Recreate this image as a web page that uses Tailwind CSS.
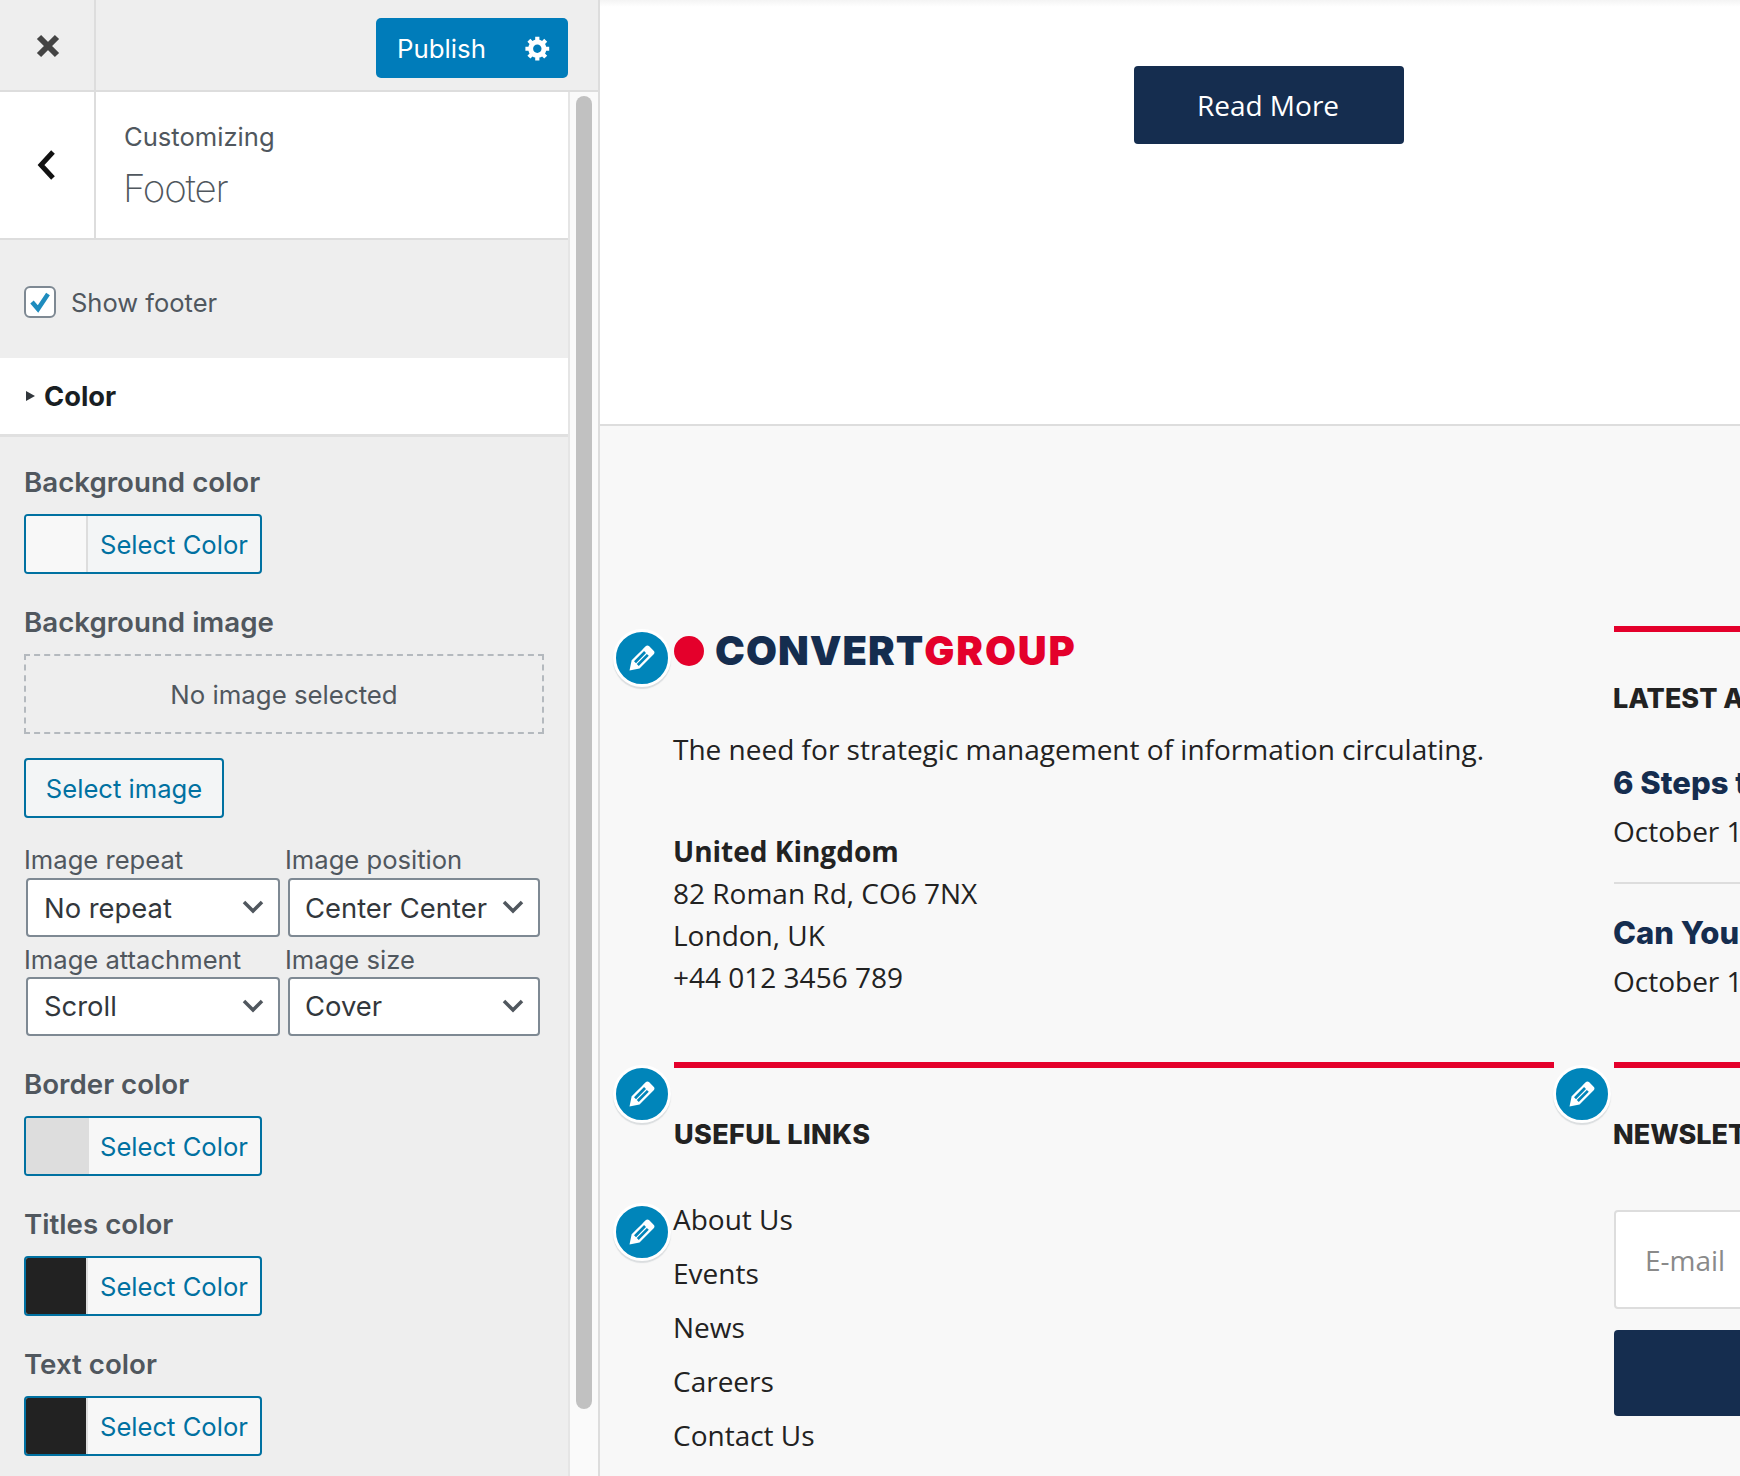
<!doctype html>
<html>
<head>
<meta charset="utf-8">
<script src="https://cdn.jsdelivr.net/npm/@tailwindcss/browser@4"></script>
</head>
<body class="m-0 w-[1740px] h-[1476px] overflow-hidden bg-white">
<div class="flex w-[1740px] h-[1476px] overflow-hidden">
  <aside class="w-[600px] h-[1476px] shrink-0 flex flex-col bg-[#eeeeee] border-r-2 border-[#dddddd] font-['Inter',sans-serif]">
    <header class="h-[92px] shrink-0 flex border-b-2 border-[#dddddd]">
      <div class="w-[96px] border-r-2 border-[#dddddd] flex items-center pl-[34px] pt-[1px]">
        <svg width="28" height="28" viewBox="0 0 28 28"><path d="M5 5 L23 23 M23 5 L5 23" stroke="#444444" stroke-width="6"/></svg>
      </div>
      <div class="ml-[280px] mt-[18px] w-[192px] h-[60px] rounded-[5px] bg-[#007cba] flex items-center text-white text-[25.8px] pl-[21px]">
        <span class="pt-[2px]">Publish</span>
        <svg class="ml-[38px]" width="28" height="28" viewBox="0 0 20 20" fill="#ffffff"><path d="M18 12h-2.18c-.17.7-.44 1.35-.81 1.93l1.54 1.54-2.1 2.1-1.54-1.54c-.58.36-1.23.63-1.91.79V19H8v-2.18c-.68-.16-1.33-.43-1.91-.79l-1.54 1.54-2.12-2.12 1.54-1.54c-.36-.58-.63-1.23-.79-1.91H1V9.03h2.17c.16-.7.44-1.35.8-1.94L2.43 5.55l2.1-2.1 1.54 1.54c.58-.37 1.24-.64 1.93-.81V2h3v2.18c.68.16 1.33.43 1.91.79l1.54-1.54 2.12 2.12-1.54 1.54c.36.59.64 1.24.8 1.94H18V12zm-8.5 1.5c1.66 0 3-1.34 3-3s-1.34-3-3-3-3 1.34-3 3 1.34 3 3 3z"/></svg>
      </div>
    </header>
    <div class="flex flex-1 min-h-0">
      <div class="w-[568px] shrink-0">
        <div class="h-[148px] flex bg-white border-b-2 border-[#dddddd]">
          <div class="w-[96px] border-r-2 border-[#dddddd] flex items-center justify-center">
            <svg width="22" height="32" viewBox="0 0 22 32"><path d="M17 3 L5 16 L17 29" fill="none" stroke="#111111" stroke-width="5"/></svg>
          </div>
          <div class="pl-[28px] pt-[27px]">
            <div class="text-[25.6px] leading-[36px] text-[#50575e]">Customizing</div>
            <div class="text-[38.5px] leading-[50px] font-extralight text-[#50575e] mt-[8px] -ml-[1px] tracking-[-1.2px]">Footer</div>
          </div>
        </div>
        <div class="h-[118px] flex items-center pl-[24px] pt-[6px] text-[25.5px] text-[#50575e]">
          <div class="w-[32px] h-[32px] rounded-[6px] border-2 border-[#7e8993] bg-white flex items-center justify-center">
            <svg width="24" height="24" viewBox="0 0 24 24"><path d="M4 12 L10 19 L20 4" fill="none" stroke="#1e8cbe" stroke-width="4.5"/></svg>
          </div>
          <span class="ml-[15px] pt-[2px]">Show footer</span>
        </div>
        <div class="h-[79px] bg-white border-b-[3px] border-[#e0e0e0] flex items-center pl-[26px] text-[#191e23]">
          <svg width="9" height="12" viewBox="0 0 9 12"><path d="M0 1 L9 6 L0 11 Z" fill="#32373c"/></svg>
          <span class="ml-[9px] pt-[2px] text-[27.3px] font-bold">Color</span>
        </div>
        <div class="px-[24px]">
          <div class="mt-[29px] text-[27.7px] leading-[32px] font-semibold text-[#50575e]">Background color</div>
          <div class="mt-[16px] w-[238px] h-[60px] rounded-[4px] border-2 border-[#0071a1] bg-[#f3f5f6] flex overflow-hidden">
            <div class="w-[62px] shrink-0 bg-[#f8f8f8] border-r-2 border-[#dddddd]"></div>
            <span class="pl-[12px] text-[25.6px] leading-[58px] text-[#0071a1]">Select Color</span>
          </div>
          <div class="mt-[32px] text-[27.7px] leading-[32px] font-semibold text-[#50575e]">Background image</div>
          <div class="mt-[16px] w-[520px] h-[80px] border-2 border-dashed border-[#b4b9be] flex items-center justify-center pt-[2px] text-[25.8px] text-[#50575e]">No image selected</div>
          <div class="mt-[24px] w-[200px] h-[60px] rounded-[4px] border-2 border-[#0071a1] bg-[#f3f5f6] text-center text-[25.6px] leading-[58px] text-[#0071a1]">Select image</div>
          <div class="mt-[26px] grid grid-cols-[261px_1fr] text-[25.6px] text-[#50575e]">
            <div class="leading-[32px]">Image repeat</div>
            <div class="leading-[32px]">Image position</div>
            <div class="relative ml-[2px] mt-[2px] w-[254px] h-[59px]">
              <select class="w-full h-full appearance-none bg-white border-2 border-[#7e8993] rounded-[4px] pl-[16px] pt-[2px] text-[27.4px] text-[#32373c]"><option>No repeat</option></select>
              <svg class="absolute right-[15px] top-[21px]" width="24" height="16" viewBox="0 0 24 16"><path d="M3 3 L12 12 L21 3" fill="none" stroke="#50575e" stroke-width="3.5"/></svg>
            </div>
            <div class="relative ml-[3px] mt-[2px] w-[252px] h-[59px]">
              <select class="w-full h-full appearance-none bg-white border-2 border-[#7e8993] rounded-[4px] pl-[15px] pt-[2px] text-[27.4px] text-[#32373c]"><option>Center Center</option></select>
              <svg class="absolute right-[15px] top-[21px]" width="24" height="16" viewBox="0 0 24 16"><path d="M3 3 L12 12 L21 3" fill="none" stroke="#50575e" stroke-width="3.5"/></svg>
            </div>
            <div class="mt-[7px] leading-[32px]">Image attachment</div>
            <div class="mt-[7px] leading-[32px]">Image size</div>
            <div class="relative ml-[2px] mt-[1px] w-[254px] h-[59px]">
              <select class="w-full h-full appearance-none bg-white border-2 border-[#7e8993] rounded-[4px] pl-[16px] text-[27.4px] text-[#32373c]"><option>Scroll</option></select>
              <svg class="absolute right-[15px] top-[21px]" width="24" height="16" viewBox="0 0 24 16"><path d="M3 3 L12 12 L21 3" fill="none" stroke="#50575e" stroke-width="3.5"/></svg>
            </div>
            <div class="relative ml-[3px] mt-[1px] w-[252px] h-[59px]">
              <select class="w-full h-full appearance-none bg-white border-2 border-[#7e8993] rounded-[4px] pl-[15px] text-[27.4px] text-[#32373c]"><option>Cover</option></select>
              <svg class="absolute right-[15px] top-[21px]" width="24" height="16" viewBox="0 0 24 16"><path d="M3 3 L12 12 L21 3" fill="none" stroke="#50575e" stroke-width="3.5"/></svg>
            </div>
          </div>
          <div class="mt-[32px] text-[27.7px] leading-[32px] font-semibold text-[#50575e]">Border color</div>
          <div class="mt-[16px] w-[238px] h-[60px] rounded-[4px] border-2 border-[#0071a1] bg-[#f7f7f7] flex overflow-hidden">
            <div class="w-[63px] shrink-0 bg-[#dddddd]"></div>
            <span class="pl-[11px] text-[25.6px] leading-[58px] text-[#0071a1]">Select Color</span>
          </div>
          <div class="mt-[32px] text-[27.7px] leading-[32px] font-semibold text-[#50575e]">Titles color</div>
          <div class="mt-[16px] w-[238px] h-[60px] rounded-[4px] border-2 border-[#0071a1] bg-[#f7f7f7] flex overflow-hidden">
            <div class="w-[62px] shrink-0 bg-[#222222] border-r-2 border-[#dddddd]"></div>
            <span class="pl-[12px] text-[25.6px] leading-[58px] text-[#0071a1]">Select Color</span>
          </div>
          <div class="mt-[32px] text-[27.7px] leading-[32px] font-semibold text-[#50575e]">Text color</div>
          <div class="mt-[16px] w-[238px] h-[60px] rounded-[4px] border-2 border-[#0071a1] bg-[#f7f7f7] flex overflow-hidden">
            <div class="w-[62px] shrink-0 bg-[#222222] border-r-2 border-[#dddddd]"></div>
            <span class="pl-[12px] text-[25.6px] leading-[58px] text-[#0071a1]">Select Color</span>
          </div>
        </div>
      </div>
      <div class="w-[30px] shrink-0 bg-[#fafafa] border-l-2 border-[#e5e5e5] pl-[6px] pt-[4px]">
        <div class="w-[16px] h-[1313px] rounded-full bg-[#c1c1c1]"></div>
      </div>
    </div>
  </aside>

  <main class="w-[1140px] h-[1476px] overflow-hidden font-['Open_Sans',sans-serif] text-[#222222]">
    <div class="w-[1338px]">
      <div class="h-[424px] bg-[linear-gradient(#f4f4f4,#ffffff_7px)] pt-[66px] flex justify-center items-start">
        <div class="w-[270px] h-[78px] rounded-[4px] bg-[#152d4f] text-white text-[28px] flex items-center justify-center pr-[2px]">Read More</div>
      </div>
      <div class="relative h-[1052px] bg-[#f8f8f8] border-t-2 border-[#dddddd]">
        <div class="grid grid-cols-[880px_1fr] gap-x-[60px] pl-[74px] pt-[200px]">
          <div>
            <div class="flex items-center h-[42px] mt-[4px]">
              <div class="w-[30px] h-[30px] rounded-full bg-[#e4002b]"></div>
              <div class="ml-[11px] text-[40px] leading-[42px] font-black font-['Inter',sans-serif] tracking-[1px] text-[#152d4f]">CONVERT<span class="text-[#e4002b] tracking-[1.9px]">GROUP</span></div>
            </div>
            <p class="mt-[56px] -ml-[1px] text-[28px] leading-[42px] whitespace-nowrap">The need for strategic management of information circulating.</p>
            <p class="mt-[60px] -ml-[1px] text-[28px] leading-[42px] font-bold">United Kingdom</p>
            <p class="-ml-[1px] text-[28px] leading-[42px]">82 Roman Rd, CO6 7NX</p>
            <p class="-ml-[1px] text-[28px] leading-[42px]">London, UK</p>
            <p class="-ml-[1px] text-[28px] leading-[42px]">+44 012 3456 789</p>
          </div>
          <div class="h-[436px] border-t-[6px] border-[#e4002b]">
            <div class="mt-[50px] -ml-[1px] text-[27px] leading-[34px] font-extrabold font-['Inter',sans-serif] whitespace-nowrap">LATEST ARTICLES</div>
            <div class="mt-[47px] -ml-[1px] text-[31px] leading-[40px] font-extrabold font-['Inter',sans-serif] text-[#152d4f] whitespace-nowrap">6 Steps to Success</div>
            <div class="mt-[7px] -ml-[1px] text-[28px] leading-[42px]">October 10, 2019</div>
            <div class="mt-[30px] h-[2px] bg-[#dddddd]"></div>
            <div class="mt-[29px] -ml-[1px] text-[31px] leading-[40px] font-extrabold font-['Inter',sans-serif] text-[#152d4f] whitespace-nowrap">Can You Improve</div>
            <div class="mt-[7px] -ml-[1px] text-[28px] leading-[42px]">October 10, 2019</div>
          </div>
          <div class="border-t-[6px] border-[#e4002b]">
            <div class="mt-[50px] text-[27px] leading-[34px] font-extrabold tracking-[0.4px] font-['Inter',sans-serif]">USEFUL LINKS</div>
            <ul class="mt-[40px] -ml-[1px] text-[28px] leading-[54px]">
              <li>About Us</li>
              <li>Events</li>
              <li>News</li>
              <li>Careers</li>
              <li>Contact Us</li>
            </ul>
          </div>
          <div class="border-t-[6px] border-[#e4002b]">
            <div class="mt-[50px] -ml-[1px] text-[27px] leading-[34px] font-extrabold font-['Inter',sans-serif] whitespace-nowrap">NEWSLETTER</div>
            <div class="mt-[58px] h-[99px] rounded-[4px] border-2 border-[#dddddd] bg-white pl-[29px] flex items-center text-[28px] text-[#8a8a8a]">E-mail</div>
            <div class="mt-[21px] h-[86px] rounded-[4px] bg-[#152d4f]"></div>
          </div>
        </div>
        <div class="absolute left-[13px] top-[203px] w-[58px] h-[58px] rounded-full border-[3px] border-white bg-[#0085ba] shadow-[0_2px_1px_rgba(46,68,83,0.15)] flex items-center justify-center">
          <svg width="36" height="36" viewBox="0 0 20 20" fill="#ffffff"><path d="M13.89 3.39l2.71 2.72c.46.46.42 1.24.03 1.64l-8.01 8.02-5.56 1.16 1.16-5.58s7.6-7.63 7.99-8.03c.39-.39 1.22-.39 1.68.07zm-2.73 2.79l-5.59 5.61 1.11 1.11 5.54-5.65zm-2.97 8.23l5.58-5.6-1.07-1.08-5.59 5.6z"/></svg>
        </div>
        <div class="absolute left-[13px] top-[639px] w-[58px] h-[58px] rounded-full border-[3px] border-white bg-[#0085ba] shadow-[0_2px_1px_rgba(46,68,83,0.15)] flex items-center justify-center">
          <svg width="36" height="36" viewBox="0 0 20 20" fill="#ffffff"><path d="M13.89 3.39l2.71 2.72c.46.46.42 1.24.03 1.64l-8.01 8.02-5.56 1.16 1.16-5.58s7.6-7.63 7.99-8.03c.39-.39 1.22-.39 1.68.07zm-2.73 2.79l-5.59 5.61 1.11 1.11 5.54-5.65zm-2.97 8.23l5.58-5.6-1.07-1.08-5.59 5.6z"/></svg>
        </div>
        <div class="absolute left-[13px] top-[777px] w-[58px] h-[58px] rounded-full border-[3px] border-white bg-[#0085ba] shadow-[0_2px_1px_rgba(46,68,83,0.15)] flex items-center justify-center">
          <svg width="36" height="36" viewBox="0 0 20 20" fill="#ffffff"><path d="M13.89 3.39l2.71 2.72c.46.46.42 1.24.03 1.64l-8.01 8.02-5.56 1.16 1.16-5.58s7.6-7.63 7.99-8.03c.39-.39 1.22-.39 1.68.07zm-2.73 2.79l-5.59 5.61 1.11 1.11 5.54-5.65zm-2.97 8.23l5.58-5.6-1.07-1.08-5.59 5.6z"/></svg>
        </div>
        <div class="absolute left-[953px] top-[639px] w-[58px] h-[58px] rounded-full border-[3px] border-white bg-[#0085ba] shadow-[0_2px_1px_rgba(46,68,83,0.15)] flex items-center justify-center">
          <svg width="36" height="36" viewBox="0 0 20 20" fill="#ffffff"><path d="M13.89 3.39l2.71 2.72c.46.46.42 1.24.03 1.64l-8.01 8.02-5.56 1.16 1.16-5.58s7.6-7.63 7.99-8.03c.39-.39 1.22-.39 1.68.07zm-2.73 2.79l-5.59 5.61 1.11 1.11 5.54-5.65zm-2.97 8.23l5.58-5.6-1.07-1.08-5.59 5.6z"/></svg>
        </div>
      </div>
    </div>
  </main>
</div>
</body>
</html>
